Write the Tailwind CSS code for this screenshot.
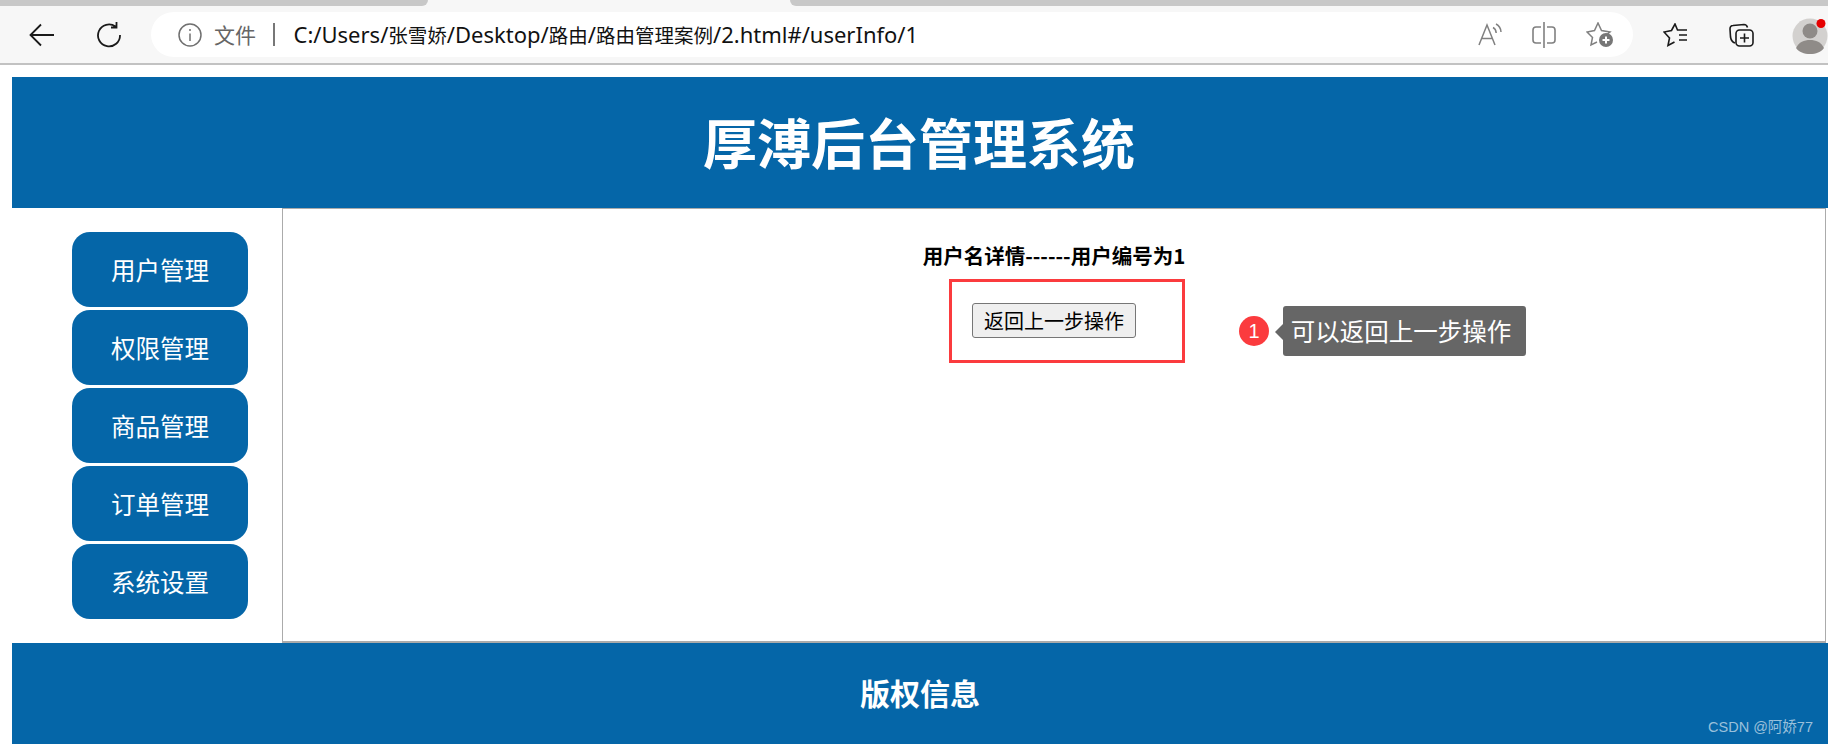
<!DOCTYPE html>
<html lang="zh-CN">
<head>
<meta charset="UTF-8">
<title>厚溥后台管理系统</title>
<script src="https://cdn.jsdelivr.net/npm/@tailwindcss/browser@4"></script>
</head>
<body class="bg-white w-[1828px] h-[744px] overflow-hidden [font-family:'Noto_Sans_CJK_SC',sans-serif]">

<!-- browser chrome -->
<div class="h-[65px] bg-[#f7f7f7] border-b-2 border-[#c2c2c2]">
    <div class="flex h-[6px]">
        <div class="w-[428px] bg-[#c8c8c8] rounded-br-md"></div>
        <div class="w-[362px]"></div>
        <div class="flex-1 bg-[#c8c8c8] rounded-bl-md"></div>
    </div>
    <div class="flex items-center h-[57px] relative">
        <svg class="ml-[29px] w-[26px] h-[24px]" viewBox="0 0 26 24" fill="none" stroke="#1a1a1a" stroke-width="1.8"><path d="M25 12H2M12 1.500 1.500 12 12 22.500"/></svg>
        <svg class="ml-[41px] w-[26px] h-[26px]" viewBox="0 0 26 26" fill="none" stroke="#1a1a1a" stroke-width="1.8"><path d="M19.500 4.500A11 11 0 1 0 24 13M20.500 0v5.500H15"/></svg>
        <div class="ml-[29px] w-[1482px] h-[45px] bg-white rounded-full flex items-center pl-[27px] pr-[20px]">
            <svg class="w-[24px] h-[24px] shrink-0" viewBox="0 0 24 24" fill="none" stroke="#707070" stroke-width="1.5"><circle cx="12" cy="12" r="11"/><path d="M12 10.500V18M12 6v2"/></svg>
            <span class="ml-[12px] text-[21px] leading-none text-[#666]">文件</span>
            <span class="ml-[17px] w-[1.5px] h-[23px] bg-[#777]"></span>
            <span class="ml-[19px] text-[22px] leading-none text-[#111] whitespace-nowrap [font-family:'Noto_Sans','Noto_Sans_CJK_SC',sans-serif]">C:/Users/<span class="text-[19.500px]">张雪娇</span>/Desktop/<span class="text-[19.500px]">路由</span>/<span class="text-[19.500px]">路由管理案例</span>/2.html#/userInfo/1</span>
            <div class="ml-auto flex items-center gap-[30px]">
                <svg class="w-[24px] h-[24px]" viewBox="0 0 24 24" fill="none" stroke="#808080" stroke-width="1.5"><path d="M1 22 9 2l8 20M3.500 15.500h11M15 4.500c2 1 3 3 3.200 5.500M18 1c3 1.500 4.800 4.500 5 8"/></svg>
                <svg class="w-[24px] h-[26px]" viewBox="0 0 24 26" fill="none" stroke="#808080" stroke-width="1.6"><path d="M9 5H4a3 3 0 0 0-3 3v10a3 3 0 0 0 3 3h5M15 5h5a3 3 0 0 1 3 3v10a3 3 0 0 1-3 3h-5M12 0v26"/></svg>
                <svg class="w-[27px] h-[25px]" viewBox="0 0 27 25" fill="none" stroke="#808080" stroke-width="1.5"><path d="M11 20 5 23 6.500 15.500 1 10 8.500 8.500 12 1 15.500 8.500 24 10 19 14"/><circle cx="20" cy="18" r="7" fill="#777" stroke="none"/><path d="M20 14.500v7M16.500 18h7" stroke="#fff" stroke-width="2"/></svg>
            </div>
        </div>
        <svg class="ml-[30px] w-[25px] h-[24px]" viewBox="0 0 25 24" fill="none" stroke="#1a1a1a" stroke-width="1.6"><path d="M24 7H14.500L12 1 8.500 7.500 1 9l5.500 6L5 22.500 11.500 19M16 12h8M16 17h8"/></svg>
        <svg class="ml-[41px] w-[25px] h-[24px]" viewBox="0 0 25 24" fill="none" stroke="#1a1a1a" stroke-width="1.6"><path d="M6 20C3 19 2 17 1.500 14L1 6c0-2 1-3.500 3-3.500L15 1.500c2 0 3 1 3.500 3"/><rect x="7" y="7" width="17" height="16" rx="3.500"/><path d="M15.500 10.500v9M11 15h9"/></svg>
        <div class="absolute left-[1792px] top-[12px] w-[36px] h-[36px]">
            <svg class="w-[36px] h-[36px]" viewBox="0 0 36 36"><circle cx="18" cy="18" r="17.500" fill="#d3d1cf"/><circle cx="18" cy="13" r="7.500" fill="#8f8b88"/><path d="M4 30c3-6 8-8 14-8s11 2 14 8c-3 4-8 6-14 6s-11-2-14-6z" fill="#8f8b88"/><circle cx="29" cy="5.500" r="4.500" fill="#e60000"/></svg>
        </div>
    </div>
</div>

<!-- page -->
<div class="ml-[12px] mt-[12px]">
    <header class="h-[131px] bg-[#0566a8] flex items-center justify-center">
        <h1 class="text-[54px] leading-none font-bold text-white -mt-[2px] mr-[2px]">厚溥后台管理系统</h1>
    </header>
    <div class="flex h-[435px]">
        <nav class="w-[270px] pl-[60px] pt-[24px] flex flex-col gap-[3px]">
            <a class="w-[176px] h-[75px] pt-[2px] rounded-[18px] bg-[#0566a8] text-white text-[24.500px] flex items-center justify-center">用户管理</a>
            <a class="w-[176px] h-[75px] pt-[2px] rounded-[18px] bg-[#0566a8] text-white text-[24.500px] flex items-center justify-center">权限管理</a>
            <a class="w-[176px] h-[75px] pt-[2px] rounded-[18px] bg-[#0566a8] text-white text-[24.500px] flex items-center justify-center">商品管理</a>
            <a class="w-[176px] h-[75px] pt-[2px] rounded-[18px] bg-[#0566a8] text-white text-[24.500px] flex items-center justify-center">订单管理</a>
            <a class="w-[176px] h-[75px] pt-[2px] rounded-[18px] bg-[#0566a8] text-white text-[24.500px] flex items-center justify-center">系统设置</a>
        </nav>
        <main class="relative w-[1544px] border border-[#ababab] border-b-2 flex flex-col items-center pt-[31px]">
            <h3 class="text-[20.500px] leading-[30px] font-bold text-black">用户名详情------用户编号为1</h3>
            <button class="mt-[33px] w-[164px] h-[35px] bg-[#efefef] border border-[#767676] rounded-[3px] text-[20px] leading-none text-black">返回上一步操作</button>
            <!-- annotation -->
            <div class="absolute left-[666px] top-[70px] w-[236px] h-[84px] border-[3px] border-[#fb3b3e]"></div>
            <div class="absolute left-[956px] top-[107px] w-[30px] h-[30px] rounded-full bg-[#fb3b3e] text-white text-[20px] flex items-center justify-center [font-family:'Liberation_Sans',sans-serif]">1</div>
            <div class="absolute left-[992px] top-[115px] w-0 h-0 border-y-[8px] border-y-transparent border-r-[8px] border-r-[#666]"></div>
            <div class="absolute left-[1000px] top-[97px] w-[243px] h-[50px] pr-[7px] rounded-[3px] bg-[#666] text-white text-[24.500px] flex items-center justify-center">可以返回上一步操作</div>
        </main>
    </div>
    <footer class="h-[101px] bg-[#0566a8] flex items-center justify-center relative">
        <span class="text-[30px] leading-none font-bold text-white -mt-[3px]">版权信息</span>
        <span class="absolute right-[15px] bottom-[10px] text-[14.500px] leading-none text-white/60 [font-family:'Liberation_Sans','Noto_Sans_CJK_SC',sans-serif]">CSDN @阿娇77</span>
    </footer>
</div>

</body>
</html>
